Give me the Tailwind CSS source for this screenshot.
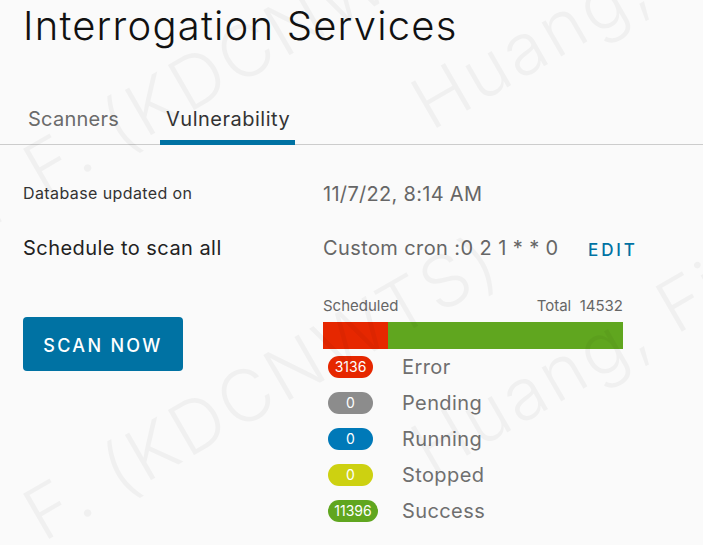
<!DOCTYPE html>
<html lang="en">
  <head>
    <meta charset="UTF-8" />
    <title>Interrogation Services</title>
    <script src="https://cdn.jsdelivr.net/npm/@tailwindcss/browser@4"></script>
  </head>
  <body class="relative h-[545px] w-[703px] overflow-hidden bg-[#fafafa] font-['Inter','Liberation_Sans',sans-serif]">
    <div class="relative pt-[3px]">
      <h1 class="pl-[23px] text-[40px] leading-[46px] font-light tracking-[1.2px] text-[#111]">Interrogation Services</h1>

      <!-- Tabs -->
      <div class="mt-[49px] flex h-[47px] border-b border-[#ccc] pl-[23px] text-[20px] leading-[43px]">
        <div class="w-[137px] px-[5px] tracking-[0.25px] text-[#6b6b6b]">Scanners</div>
        <div class="h-[47px] w-[135px] border-b-[5px] border-[#0072a3] px-[6px] tracking-[0.5px] text-[#333]">Vulnerability</div>
      </div>

      <!-- Details -->
      <div class="mt-[34px] flex items-center pl-[23px]">
        <div class="w-[300px] pb-[2px] text-[16px] tracking-[0.4px] text-[#333]">Database updated on</div>
        <div class="text-[20px] tracking-[0.3px] text-[#666]">11/7/22, 8:14 AM</div>
      </div>
      <div class="mt-[23px] flex items-center pl-[23px]">
        <div class="w-[300px] text-[20px] tracking-[0.45px] text-[#222]">Schedule to scan all</div>
        <div class="w-[265px] text-[20px] tracking-[0.4px] text-[#666]">Custom cron :0 2 1 * * 0</div>
        <div class="pt-[6px] text-[17px] font-medium tracking-[2.9px] text-[#0072a3]">EDIT</div>
      </div>

      <div class="mt-[33px] flex pl-[23px]">
        <div class="w-[300px] pt-[20px]">
          <button class="h-[54px] w-[160px] rounded-[4px] bg-[#0072a3] pt-[3px] text-[18px] font-medium tracking-[2.3px] text-white">SCAN NOW</button>
        </div>
        <div class="w-[300px]">
          <div class="flex justify-between text-[15px] leading-[18px] text-[#666]">
            <span>Scheduled</span>
            <span>Total&nbsp; 14532</span>
          </div>
          <div class="mt-[7px] flex h-[27px]">
            <div class="w-[65px] bg-[#e62700]"></div>
            <div class="flex-1 bg-[#60a61f]"></div>
          </div>

          <!-- Status list -->
          <div class="mt-[7px] flex flex-col gap-[14px] pl-[5px] text-[20px] leading-[22px] tracking-[0.4px] text-[#6f6f6f]">
            <div class="flex items-center">
              <span class="h-[22px] w-[45px] rounded-full bg-[#e62700] text-center text-[14px] tracking-normal text-white">3136</span>
              <span class="ml-[29px]">Error</span>
            </div>
            <div class="flex items-center">
              <span class="h-[22px] w-[45px] rounded-full bg-[#8c8c8c] text-center text-[14px] tracking-normal text-white">0</span>
              <span class="ml-[29px]">Pending</span>
            </div>
            <div class="flex items-center">
              <span class="h-[22px] w-[45px] rounded-full bg-[#0079b8] text-center text-[14px] tracking-normal text-white">0</span>
              <span class="ml-[29px]">Running</span>
            </div>
            <div class="flex items-center">
              <span class="h-[22px] w-[45px] rounded-full bg-[#cdd111] text-center text-[14px] tracking-normal text-white">0</span>
              <span class="ml-[29px]">Stopped</span>
            </div>
            <div class="flex items-center">
              <span class="h-[22px] w-[50px] rounded-full bg-[#60a61f] text-center text-[14px] tracking-normal text-white">11396</span>
              <span class="ml-[24px]">Success</span>
            </div>
          </div>
        </div>
      </div>
    </div>

    <!-- Watermark -->
    <div class="pointer-events-none absolute inset-0 overflow-hidden text-[72px] font-light text-black/[0.04] whitespace-nowrap">
      <span class="absolute left-[-34px] top-[158px] -rotate-[30deg] origin-left tracking-[3px]">Y F. (KDCNWTS)</span>
      <span class="absolute left-[-34px] top-[503px] -rotate-[30deg] origin-left tracking-[3px]">Y F. (KDCNWTS)</span>
      <span class="absolute left-[418px] top-[55px] -rotate-[30deg] origin-left tracking-[3px]">Huang, Fi</span>
      <span class="absolute left-[418px] top-[400px] -rotate-[30deg] origin-left tracking-[3px]">Huang, Fi</span>
    </div>
  </body>
</html>
